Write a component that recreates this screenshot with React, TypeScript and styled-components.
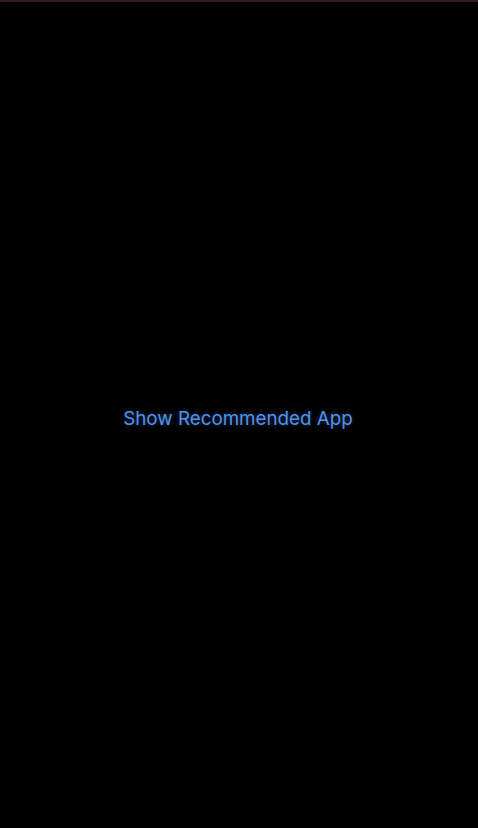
import React from 'react';
import styled, {createGlobalStyle} from "styled-components";

const GlobalStyle = createGlobalStyle`
  html, body {
    margin: 0;
    padding: 0;
    background: #000;
  }
`;

const App = () => {
  return (
    <>
      <GlobalStyle/>
      <Screen>
        <TopEdge/>
        <Center>
          <LinkButton type="button">Show Recommended App</LinkButton>
        </Center>
      </Screen>
    </>
  );
};

const Screen = styled.div`
  width: 478px;
  height: 828px;
  background: #000;
  display: flex;
  flex-direction: column;
`;
const TopEdge = styled.div`
  height: 2px;
  background: #3a1822;
`;
const Center = styled.div`
  flex: 1;
  display: flex;
  align-items: center;
  justify-content: center;
  padding: 6px 2px 0 0;
`;
const LinkButton = styled.button`
  background: none;
  border: none;
  padding: 0;
  font-family: Inter, "Noto Sans", sans-serif;
  font-size: 18.8px;
  font-weight: 400;
  color: #5592e0;
  text-shadow: 0 0 4px rgba(40, 90, 200, 0.6);
  cursor: pointer;
`;

export default App;
